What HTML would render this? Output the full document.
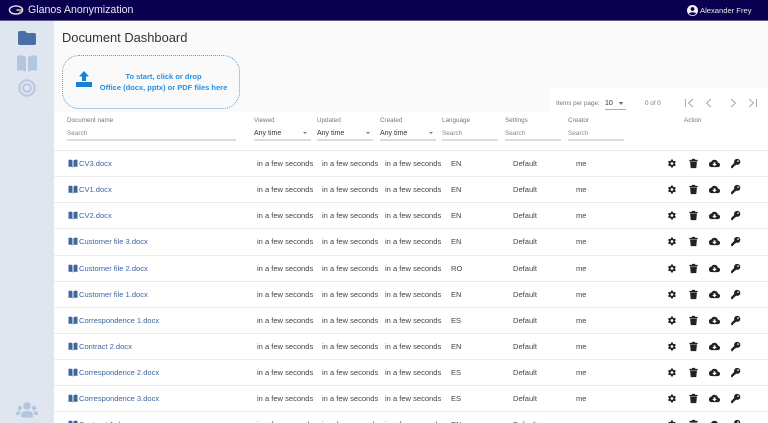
<!DOCTYPE html>
<html><head><meta charset="utf-8"><style>
html,body{margin:0;padding:0;width:768px;height:423px;overflow:hidden;background:#fafafa;font-family:"Liberation Sans",sans-serif}
#w{position:relative;width:768px;height:423px;overflow:hidden;filter:blur(.35px)}
.a{position:absolute;white-space:nowrap}
#top{left:0;top:0;width:768px;height:20px;background:#0b0050;border-bottom:1px solid #5f5a8c}
#side{left:0;top:21px;width:54px;height:402px;background:#dfe6f0}
#tbl{left:54px;top:112px;width:714px;height:311px;background:#fff}
#pg{left:550px;top:88px;width:218px;height:24px;background:#fff}
.h{font-size:6.3px;color:#777;line-height:9px}
.s{font-size:6.4px;color:#888;line-height:9px}
.l{height:1.5px;background:#dcdcdc}
.an{font-size:7px;color:#333;line-height:9px}
.r{position:absolute;left:54px;width:714px;height:26px;border-top:1px solid #ececec}
.r span{position:absolute;top:0;line-height:25px;font-size:7.55px;color:#444;white-space:nowrap}
.r .n{left:25px;color:#3f659f}
.r .v{left:203px}.r .u{left:268px}.r .c{left:331px}.r .g{left:397px}.r .d{left:459px}.r .m{left:522px}
.r svg{position:absolute;top:7px;width:11px;height:11px}
.r svg.b{left:14px;top:8px;width:10px;height:9px}
.i1{left:612px}.i2{left:634px}.i3{left:655px}.i4{left:676px}
</style></head><body><div id="w">
<svg width="0" height="0" style="position:absolute"><defs>
<symbol id="bk" viewBox="0 0 20 18"><path fill="#3f659f" d="M1 2c3-1 6-1 8 1v14c-2-2-5-2-8-1zM19 2c-3-1-6-1-8 1v14c2-2 5-2 8-1z"/></symbol>
<symbol id="gr" viewBox="0 0 24 24"><path fill="#222" d="M19.400 13a7.500 7.500 0 0 0 0-2l2.100-1.600-2-3.500-2.500 1a7.500 7.500 0 0 0-1.700-1L15 3.200h-4l-.4 2.700a7.500 7.500 0 0 0-1.700 1l-2.500-1-2 3.500L6.500 11a7.500 7.500 0 0 0 0 2l-2.100 1.600 2 3.500 2.500-1a7.500 7.500 0 0 0 1.700 1l.4 2.700h4l.4-2.700a7.500 7.500 0 0 0 1.700-1l2.500 1 2-3.500zM13 15a3 3 0 1 1 0-6 3 3 0 0 1 0 6z"/></symbol>
<symbol id="tr" viewBox="0 0 24 24"><path fill="#222" d="M9 2h6l1 2h5v3H3V4h5zM4.500 8h15L18 22H6z"/></symbol>
<symbol id="cl" viewBox="0 0 24 24"><path fill="#222" d="M19.400 10A7.500 7.500 0 0 0 5.400 8 6 6 0 0 0 6 20h13a5 5 0 0 0 .4-10zM12 18l-5-5h3V9.500h4V13h3z"/></symbol>
<symbol id="ke" viewBox="0 0 24 24"><path fill="#222" fill-rule="evenodd" d="M16 2a6.500 6.500 0 0 1 0 13c-.9 0-1.700-.2-2.400-.5L11 17H9v2.500H6.500V22H2.500v-4.500l6.800-6.800A6.500 6.500 0 0 1 16 2zm1.500 3a1.800 1.800 0 1 0 0 3.600 1.800 1.800 0 0 0 0-3.600z"/></symbol>
</defs></svg>
<div class="a" id="top"></div>
<svg class="a" style="left:8px;top:4px" width="16" height="12" viewBox="0 0 17 12"><ellipse cx="8.500" cy="6" rx="7" ry="4.300" fill="none" stroke="#e4e6ee" stroke-width="1.500"/><path d="M9 6h6" stroke="#e4e6ee" stroke-width="1.500"/><circle cx="13" cy="7" r="1.500" fill="#c9772a"/></svg>
<div class="a" style="left:28px;top:2px;font-size:10.600px;line-height:16px;color:#e8e8f0">Glanos Anonymization</div>
<svg class="a" style="left:687px;top:4.500px" width="11" height="11" viewBox="0 0 22 22"><circle cx="11" cy="11" r="11" fill="#f2f2f6"/><circle cx="11" cy="8" r="3.800" fill="#0b0050"/><path d="M3.800 17c2-3.500 12.400-3.500 14.400 0-3.500 4.500-11 4.500-14.400 0z" fill="#0b0050"/></svg>
<div class="a" style="left:700px;top:4.500px;font-size:7.600px;line-height:12px;color:#e8e8f0">Alexander Frey</div>

<div class="a" id="side"></div>
<svg class="a" style="left:18px;top:31px" width="18" height="14" viewBox="0 0 18 14"><path fill="#4a6fa6" d="M0 2q0-2 2-2h5l2 2h7q2 0 2 2v8q0 2-2 2H2q-2 0-2-2z"/></svg>
<svg class="a" style="left:17px;top:55px" width="20" height="17" viewBox="0 0 20 17"><path fill="#b4c6de" d="M0 1c3-1 7-1 9 1v15c-2-2-6-2-9-1zM20 1c-3-1-7-1-9 1v15c2-2 6-2 9-1z"/></svg>
<svg class="a" style="left:18px;top:79px" width="18" height="18" viewBox="0 0 18 18"><circle cx="9" cy="9" r="7.700" fill="none" stroke="#bccbe1" stroke-width="2.200"/><circle cx="9" cy="9" r="3.800" fill="none" stroke="#bccbe1" stroke-width="2.200"/></svg>
<svg class="a" style="left:16px;top:402px" width="22" height="16" viewBox="0 0 22 16"><g fill="#b4c6de"><circle cx="11" cy="4" r="3.800"/><circle cx="3.800" cy="6" r="2.200"/><circle cx="18.200" cy="6" r="2.200"/><path d="M5 15v-2q0-4 6-4t6 4v2q-6 1.500-12 0zM0 13v-1q0-3 3.500-3 1 0 1.200.3Q3.800 10.500 3.800 13zM22 13v-1q0-3-3.500-3-1 0-1.200.3 1 1.200 1 3.700z"/></g></svg>

<div class="a" style="left:62px;top:28.500px;font-size:12.900px;line-height:18px;color:#333">Document Dashboard</div>
<div class="a" style="left:62px;top:54.500px;width:176px;height:52px;border:1.400px dotted #4aa0e4;border-radius:17px"></div>
<svg class="a" style="left:76px;top:71px" width="16" height="16" viewBox="0 0 16 16"><path fill="#1681d8" d="M8 0l5 5.500H10V10H6V5.500H3zM0 11h16v5H0z"/></svg>
<div class="a" style="left:65.500px;top:72px;width:196px;text-align:center;font-size:7.500px;line-height:10.500px;font-weight:700;color:#2a8fe2;white-space:normal">To start, click or drop<br>Office (docx, pptx) or PDF files here</div>

<div class="a" id="pg"></div>
<div class="a" style="left:556px;top:98.500px;font-size:6.300px;line-height:9px;color:#777">Items per page:</div>
<div class="a" style="left:605px;top:98.500px;font-size:7px;line-height:9px;color:#333">10</div>
<div class="a" style="left:619px;top:102px;width:0;height:0;border:2.500px solid transparent;border-top:3px solid #666;border-bottom:0"></div>
<div class="a" style="left:605px;top:109px;width:21px;height:1px;background:#aaa"></div>
<div class="a" style="left:645px;top:98.500px;font-size:6.300px;line-height:9px;color:#777">0 of 0</div>
<svg class="a" style="left:682px;top:96px" width="80" height="14" viewBox="0 0 80 14" fill="none" stroke="#aaa" stroke-width="1"><path d="M3.500 3v8M11 3L6.500 7l4.500 4M29 3l-4.500 4 4.500 4M49 3l4.500 4-4.500 4M67 3l4.500 4-4.500 4M74.500 3v8"/></svg>

<div class="a" id="tbl"></div>
<div class="a h" style="left:67px;top:115.500px">Document name</div>
<div class="a h" style="left:254px;top:115.500px">Viewed</div>
<div class="a h" style="left:317px;top:115.500px">Updated</div>
<div class="a h" style="left:380px;top:115.500px">Created</div>
<div class="a h" style="left:442px;top:115.500px">Language</div>
<div class="a h" style="left:505px;top:115.500px">Settings</div>
<div class="a h" style="left:568px;top:115.500px">Creator</div>
<div class="a h" style="left:684px;top:115.500px">Action</div>

<div class="a s" style="left:67px;top:128.500px">Search</div><div class="a l" style="left:67px;top:139px;width:169px"></div>
<div class="a an" style="left:254px;top:128.500px">Any time</div><div class="a l" style="left:254px;top:139px;width:57px"></div>
<div class="a an" style="left:317px;top:128.500px">Any time</div><div class="a l" style="left:317px;top:139px;width:56px"></div>
<div class="a an" style="left:380px;top:128.500px">Any time</div><div class="a l" style="left:380px;top:139px;width:56px"></div>
<div class="a" style="left:303px;top:132px;border:2.300px solid transparent;border-top:2.500px solid #777;border-bottom:0"></div>
<div class="a" style="left:366px;top:132px;border:2.300px solid transparent;border-top:2.500px solid #777;border-bottom:0"></div>
<div class="a" style="left:429px;top:132px;border:2.300px solid transparent;border-top:2.500px solid #777;border-bottom:0"></div>
<div class="a s" style="left:442px;top:128.500px">Search</div><div class="a l" style="left:442px;top:139px;width:56px"></div>
<div class="a s" style="left:505px;top:128.500px">Search</div><div class="a l" style="left:505px;top:139px;width:56px"></div>
<div class="a s" style="left:568px;top:128.500px">Search</div><div class="a l" style="left:568px;top:139px;width:56px"></div>

<div class="r" style="top:150px"><svg class="b"><use href="#bk"/></svg><span class="n">CV3.docx</span><span class="v">in a few seconds</span><span class="u">in a few seconds</span><span class="c">in a few seconds</span><span class="g">EN</span><span class="d">Default</span><span class="m">me</span><svg class="i1"><use href="#gr"/></svg><svg class="i2"><use href="#tr"/></svg><svg class="i3"><use href="#cl"/></svg><svg class="i4"><use href="#ke"/></svg></div>
<div class="r" style="top:176px"><svg class="b"><use href="#bk"/></svg><span class="n">CV1.docx</span><span class="v">in a few seconds</span><span class="u">in a few seconds</span><span class="c">in a few seconds</span><span class="g">EN</span><span class="d">Default</span><span class="m">me</span><svg class="i1"><use href="#gr"/></svg><svg class="i2"><use href="#tr"/></svg><svg class="i3"><use href="#cl"/></svg><svg class="i4"><use href="#ke"/></svg></div>
<div class="r" style="top:202px"><svg class="b"><use href="#bk"/></svg><span class="n">CV2.docx</span><span class="v">in a few seconds</span><span class="u">in a few seconds</span><span class="c">in a few seconds</span><span class="g">EN</span><span class="d">Default</span><span class="m">me</span><svg class="i1"><use href="#gr"/></svg><svg class="i2"><use href="#tr"/></svg><svg class="i3"><use href="#cl"/></svg><svg class="i4"><use href="#ke"/></svg></div>
<div class="r" style="top:228px"><svg class="b"><use href="#bk"/></svg><span class="n">Customer file 3.docx</span><span class="v">in a few seconds</span><span class="u">in a few seconds</span><span class="c">in a few seconds</span><span class="g">EN</span><span class="d">Default</span><span class="m">me</span><svg class="i1"><use href="#gr"/></svg><svg class="i2"><use href="#tr"/></svg><svg class="i3"><use href="#cl"/></svg><svg class="i4"><use href="#ke"/></svg></div>
<div class="r" style="top:254.500px"><svg class="b"><use href="#bk"/></svg><span class="n">Customer file 2.docx</span><span class="v">in a few seconds</span><span class="u">in a few seconds</span><span class="c">in a few seconds</span><span class="g">RO</span><span class="d">Default</span><span class="m">me</span><svg class="i1"><use href="#gr"/></svg><svg class="i2"><use href="#tr"/></svg><svg class="i3"><use href="#cl"/></svg><svg class="i4"><use href="#ke"/></svg></div>
<div class="r" style="top:280.500px"><svg class="b"><use href="#bk"/></svg><span class="n">Customer file 1.docx</span><span class="v">in a few seconds</span><span class="u">in a few seconds</span><span class="c">in a few seconds</span><span class="g">EN</span><span class="d">Default</span><span class="m">me</span><svg class="i1"><use href="#gr"/></svg><svg class="i2"><use href="#tr"/></svg><svg class="i3"><use href="#cl"/></svg><svg class="i4"><use href="#ke"/></svg></div>
<div class="r" style="top:307px"><svg class="b"><use href="#bk"/></svg><span class="n">Correspondence 1.docx</span><span class="v">in a few seconds</span><span class="u">in a few seconds</span><span class="c">in a few seconds</span><span class="g">ES</span><span class="d">Default</span><span class="m">me</span><svg class="i1"><use href="#gr"/></svg><svg class="i2"><use href="#tr"/></svg><svg class="i3"><use href="#cl"/></svg><svg class="i4"><use href="#ke"/></svg></div>
<div class="r" style="top:333px"><svg class="b"><use href="#bk"/></svg><span class="n">Contract 2.docx</span><span class="v">in a few seconds</span><span class="u">in a few seconds</span><span class="c">in a few seconds</span><span class="g">EN</span><span class="d">Default</span><span class="m">me</span><svg class="i1"><use href="#gr"/></svg><svg class="i2"><use href="#tr"/></svg><svg class="i3"><use href="#cl"/></svg><svg class="i4"><use href="#ke"/></svg></div>
<div class="r" style="top:359px"><svg class="b"><use href="#bk"/></svg><span class="n">Correspondence 2.docx</span><span class="v">in a few seconds</span><span class="u">in a few seconds</span><span class="c">in a few seconds</span><span class="g">ES</span><span class="d">Default</span><span class="m">me</span><svg class="i1"><use href="#gr"/></svg><svg class="i2"><use href="#tr"/></svg><svg class="i3"><use href="#cl"/></svg><svg class="i4"><use href="#ke"/></svg></div>
<div class="r" style="top:385px"><svg class="b"><use href="#bk"/></svg><span class="n">Correspondence 3.docx</span><span class="v">in a few seconds</span><span class="u">in a few seconds</span><span class="c">in a few seconds</span><span class="g">ES</span><span class="d">Default</span><span class="m">me</span><svg class="i1"><use href="#gr"/></svg><svg class="i2"><use href="#tr"/></svg><svg class="i3"><use href="#cl"/></svg><svg class="i4"><use href="#ke"/></svg></div>
<div class="r" style="top:411px"><svg class="b"><use href="#bk"/></svg><span class="n">Contract 1.docx</span><span class="v">in a few seconds</span><span class="u">in a few seconds</span><span class="c">in a few seconds</span><span class="g">EN</span><span class="d">Default</span><span class="m">me</span><svg class="i1"><use href="#gr"/></svg><svg class="i2"><use href="#tr"/></svg><svg class="i3"><use href="#cl"/></svg><svg class="i4"><use href="#ke"/></svg></div>
</div></body></html>
